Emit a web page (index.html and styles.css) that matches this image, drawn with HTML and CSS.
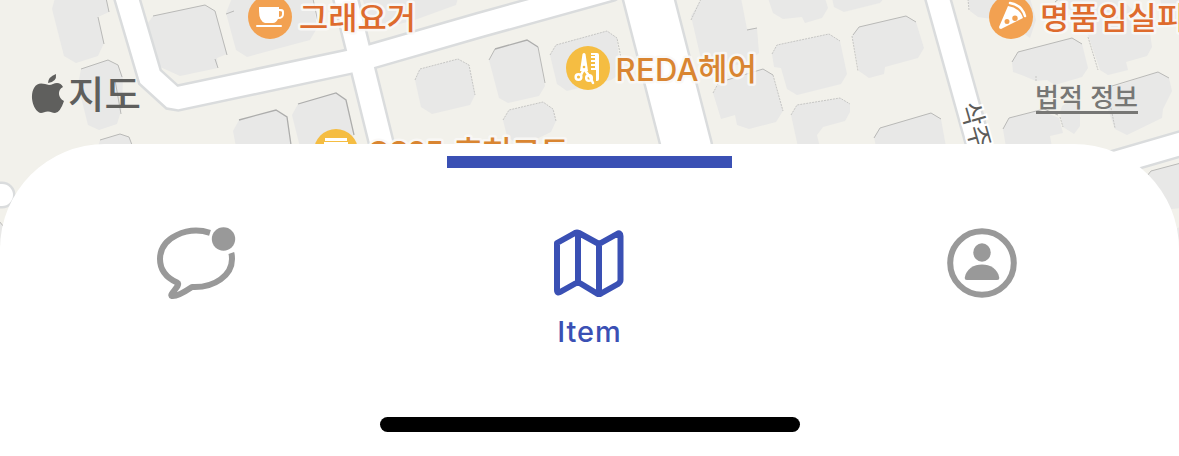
FILE: index.html
```html
<!DOCTYPE html>
<html lang="ko">
<head>
  <meta charset="UTF-8">
  <meta name="viewport" content="width=device-width, initial-scale=1.0">
  <title>Map</title>
  <link rel="stylesheet" href="styles.css">
</head>
<body>

  <div class="screen">
    <!-- Map -->
    <svg class="map" width="1179" height="260" viewBox="0 0 1179 260">
      <!-- Buildings -->
      <g class="buildings">
        <path d="M55-2L52 9L64 56L76 63L98 56L104 43L98 17L109 12L106-2Z"/>
        <path d="M81 69L108 60L118 65L123 77L122 108L117 124L99 130L88 125L78 85Z"/>
        <path d="M100 140L120 134L129 137L133 147L98 147Z"/>
        <path d="M148 23L153 16L205 5L215 11L227 54L217 58L218 68L180 76L158 66Z"/>
        <path d="M232-2L226 13L236 50L247 57L310 40L317 28L313-2Z"/>
        <path d="M233 131L239 120L276 110L287 117L292 147L236 147Z"/>
        <path d="M292 115L298 104L336 93L346 100L355 147L300 147Z"/>
        <path d="M362-2L373 30L412 21L456 5L458-2Z"/>
        <path d="M415 80L420 69L458 59L469 65L475 95L470 105L432 114L421 107Z"/>
        <path d="M489 60L495 49L527 40L538 46L545 86L539 96L508 103L499 98Z"/>
        <path d="M550 55L556 45L607 31L617 38L620 74L611 80L567 91L557 84Z"/>
        <path d="M503 120L509 110L543 102L553 109L556 121L551 132L520 147L507 136Z"/>
        <path d="M702-2L691 16L704 72L745 63L759 53L757 28L747 29L741-2Z"/>
        <path d="M713 93L720 82L763 69L773 75L783 111L776 122L749 129L737 125L735 115L721 119Z"/>
        <path d="M768-2L773 13L783 19L802 17L805 23L822 18L828 8L825-2Z"/>
        <path d="M832-2L834 7L844 12L880 3L884-2Z"/>
        <path d="M772 54L777 45L829 34L840 41L847 74L841 84L797 95L787 89L781 68L774 67Z"/>
        <path d="M852 36L859 27L906 16L916 22L924 48L918 58L885 67L884 74L869 78L859 71L855 51Z"/>
        <path d="M791 115L797 105L840 98L850 104L850 112L845 121L823 127L817 135L820 147L798 147Z"/>
        <path d="M874 137L880 128L931 113L941 119L946 147L876 147Z"/>
        <path d="M968-2L970 11L978 17L1006 21L1030 38L1036 20L1030-2Z"/>
        <path d="M1055-2L1083 20L1100 70L1108 75L1128 70L1126 62L1147 56L1152 47L1149 25L1120-2Z"/>
        <path d="M1012 62L1018 52L1072 38L1082 44L1088 68L1082 77L1055 85L1047 80L1036 81L1024 76L1013 72Z"/>
        <path d="M1003 129L1009 118L1040 110L1059 118L1063 133L1050 136L1052 147L1006 147Z"/>
        <path d="M1062 106L1069 102L1080 102L1080 126L1074 134L1063 127L1060 112Z"/>
        <path d="M1105 101L1110 88L1158 72L1169 78L1172 91L1163 109L1162 118L1127 135L1115 129Z"/>
        <path d="M1147 176L1151 171L1181 163L1181 208L1162 210Z"/>
        <path d="M1174 230L1181 226L1181 245Z"/>
        <path d="M-1 221L4 227L5 245L-1 245Z"/>
        <path d="M1160-2L1163 14L1181 22L1181-2Z"/>
      </g>

      <!-- Building roof edges -->
      <g class="edges">
        <path d="M106-2L109 12M98 17L104 44M81 69L108 60L118 65L122 77M115 80L121 114M100 140L120 134L129 137L132 145"/>
        <path d="M153 16L205 5L215 11L227 55M215 59L218 68M226 14L234 11M313-1L318 22"/>
        <path class="strong" d="M239 120L276 110L287 117L291 145M298 104L336 93L346 100L354 135M495 49L527 40L538 47"/>
        <path d="M538 47L545 83M489 60L495 49M880 128L931 113L941 119M880 128L874 138"/>
        <path d="M859 27L906 16L916 22M859 27L853 35M747 30L757 28M727 80L763 69L773 75"/>
        <path d="M1018 52L1072 38L1082 44M1018 52L1012 62M1112 86L1158 72L1169 78M1003 129L1009 118L1044 109L1058 115"/>
        <path d="M1147 176L1151 171L1181 163M-1 221L4 227M1055 2L1060-2"/>
        <path class="faint" d="M415 80L420 69L458 59L469 65L475 95M550 55L556 45L607 31L617 38L621 58M503 120L509 110L543 102L553 109L556 121"/>
        <path class="faint" d="M691 20L701-1M713 93L719 82M773 75L783 111M772 54L777 45L829 34L840 41M852 36L858 71M791 115L797 105L840 98L850 104"/>
        <path class="faint" d="M968-1L969 10M1088 37L1098 70M1111 108L1115 128M1036 76L1036 81M1060 117L1063 127"/>
      </g>

      <!-- Roads: casing first, surface on top -->
      <g class="road-casing">
        <path d="M125-8L150 77L172 97L178 98L362 59L480 25L610-11"/>
        <path d="M344-8L382 146"/>
        <path class="wide" d="M647-8L687 148"/>
        <path d="M936-8L980 150"/>
        <path d="M1190 141L1080 173"/>
        <path d="M-20 195H2"/>
      </g>
      <g class="road">
        <path d="M125-8L150 77L172 97L178 98L362 59L480 25L610-11"/>
        <path d="M344-8L382 146"/>
        <path class="wide" d="M647-8L687 148"/>
        <path d="M936-8L980 150"/>
        <path d="M1190 141L1080 173"/>
        <path d="M-20 195H2"/>
      </g>

      <!-- Street name -->
      <text class="street" transform="translate(960 105) rotate(74)" x="0" y="0">삭주로</text>

      <!-- Cafe -->
      <circle class="pin-food" cx="270" cy="17" r="22"/>
      <path class="glyph" d="M259 7H279V9H281Q284 9 284 12V14Q284 19 278 19Q276 23 273 23H265Q259 21 259 11ZM279 11V17Q282 17 282 14V12Q282 11 279 11Z" fill-rule="evenodd"/>
      <rect class="glyph" x="256" y="25" width="26" height="2" rx="1"/>
      <text class="place food" x="299" y="29" textLength="117" lengthAdjust="spacingAndGlyphs">그래요거</text>

      <!-- Pizza -->
      <circle class="pin-food" cx="1011" cy="17" r="22"/>
      <path class="glyph" fill-rule="evenodd" d="M1008 6Q1020 8 1023 18L1001 29Q999 29 999 27ZM1007 19A2.500 2.500 0 1 0 1007 24A2.500 2.500 0 1 0 1007 19ZM1015 15.500A2.700 2.700 0 1 0 1015 21A2.700 2.700 0 1 0 1015 15.500Z"/>
      <path class="crust" d="M1010 3Q1022 5 1025 16"/>
      <text class="place food" x="1040" y="29" textLength="146" lengthAdjust="spacingAndGlyphs">명품임실피</text>

      <!-- Hair salon -->
      <circle class="pin-shop" cx="588" cy="68" r="22"/>
      <path class="glyph" d="M582.500 54Q584 52 585.500 54L588 71H580Z"/>
      <path class="scissors" d="M584 69L581 75M584 69L590 77L593 83"/>
      <circle class="scissors" cx="578.500" cy="77" r="2.800"/>
      <circle class="scissors" cx="589" cy="78" r="2.800"/>
      <circle class="pin-shop" cx="584" cy="67" r="1.300"/>
      <path class="glyph" d="M591 53H597Q599 53 599 55V79Q599 81 597 81H596V70H591V68H595V66H591V64H595V62H591V60H595V58H591V56H595V55H591Z"/>
      <text class="place shop latin" x="615.500" y="81" textLength="83">REDA</text>
      <text class="place shop" x="698" y="80" textLength="59" lengthAdjust="spacingAndGlyphs">헤어</text>

      <!-- Convenience store, half hidden by the tab bar -->
      <circle class="pin-shop" cx="336" cy="151" r="22"/>
      <path class="glyph" d="M325 138H347V141H325ZM324 142H348V146H324Z"/>
      <text class="place shop latin" x="367" y="164" textLength="77">GS25</text>
      <text class="place shop" x="454" y="163" textLength="115" lengthAdjust="spacingAndGlyphs">후허코트</text>

      <!-- Attribution -->
      <g class="brand">
        <path d="M56 74Q57 82 48 83Q48 77 56 74Z"/>
        <path d="M49 85C52 85 54 83 57 83Q61 83 63 87C57 90 58 98 64 101Q60 113 55 113C52 113 51 111.500 48 111.500C45 111.500 43 113 41 113C34 112 29 97 34 88C38 81 44 84 49 85Z"/>
        <text class="brand-name" x="68" y="108" textLength="73" lengthAdjust="spacingAndGlyphs">지도</text>
      </g>
      <text class="legal" x="1035" y="107" textLength="103" lengthAdjust="spacingAndGlyphs">법적 정보</text>
      <path class="legal-line" d="M1036 112.500H1138"/>
    </svg>

    <!-- Tab bar -->
    <nav class="tab-bar">
      <a class="tab" href="#" aria-label="Chat">
        <svg class="icon chat" width="80" height="74" viewBox="0 0 80 74">
          <path class="line" d="M53 5.800C31-1 3 10 3 32C3 43 10 51 20 55.500C25 58 11 68 15 69C20 70 29 64 35 60C58 61 75 48 75 32C75 30 75 28 74.300 26"/>
          <circle cx="66.500" cy="12" r="11.700"/>
        </svg>
      </a>
      <a class="tab active" href="#">
        <svg class="icon" width="74" height="70" viewBox="0 0 74 70">
          <path class="line" d="M4 15L22 5Q24 4 26 5L46 16L64 6Q67.500 4 67.500 8V52Q67.500 54 65 56L48 65.500Q46 66.500 44 65.500L25 54L8 63.500Q4 66 4 62V15ZM25 5V54M46 16V65"/>
        </svg>
        <span class="label">Item</span>
      </a>
      <a class="tab" href="#" aria-label="Profile">
        <svg class="icon" width="72" height="70" viewBox="0 0 72 70">
          <circle class="line" cx="35" cy="35" r="31.800"/>
          <ellipse cx="35" cy="24.500" rx="8.700" ry="9.300"/>
          <path d="M20 52Q17.500 52 17.800 49.500C19 41 27 36.500 35 36.500S51 41 52.200 49.500Q52.500 52 50 52Z"/>
        </svg>
      </a>
      <div class="home-indicator"></div>
    </nav>
  </div>

</body>
</html>
```
FILE: styles.css
```css
/* Page */
body {
  margin: 0;
  background-color: #fff;
  font-family: Inter, "Noto Sans CJK KR", sans-serif;
  overflow: hidden;
}

/* Map and tab bar share one grid cell */
.screen {
  display: grid;
  width: 1179px;
  height: 456px;
}

.map {
  grid-area: 1 / 1;
  display: block;
  background-color: #f2f1eb;
}

/* Map drawing */
.buildings {
  fill: #e8e8e7;
}

.edges {
  fill: none;
  stroke: #b9b9b7;
  stroke-width: 1;
}

.edges .strong {
  stroke: #adadac;
  stroke-width: 1.3;
}

.edges .faint {
  stroke: #c6c6c4;
  stroke-dasharray: 2 1;
}

.road-casing,
.road {
  fill: none;
  stroke-linecap: round;
}

.road-casing {
  stroke: #dadcdd;
  stroke-width: 27px;
}

.road {
  stroke: #fff;
  stroke-width: 22px;
}

.road-casing .wide {
  stroke-width: 53px;
}

.road .wide {
  stroke-width: 48px;
}

/* Pins and labels */
.pin-food {
  fill: #f2a151;
}

.pin-shop {
  fill: #f5bd42;
}

.glyph {
  fill: #fff;
}

.crust,
.scissors {
  fill: none;
  stroke: #fff;
  stroke-width: 2.5px;
  stroke-linecap: round;
}

.place {
  font-family: "Noto Sans CJK KR", sans-serif;
  font-size: 31px;
  font-weight: 500;
  stroke: rgba(250, 249, 247, 0.85);
  stroke-width: 5px;
  stroke-linejoin: round;
  paint-order: stroke;
}

.place.latin {
  font-family: Inter, sans-serif;
  font-size: 31px;
}

.food {
  fill: #de6b2d;
}

.shop {
  fill: #d98531;
}

.street {
  font-family: "Noto Sans CJK KR", sans-serif;
  font-size: 26px;
  fill: #5c5c5a;
  stroke: #fff;
  stroke-width: 4px;
  paint-order: stroke;
}

.brand {
  fill: #5f5f5d;
}

.brand-name {
  font-family: "Noto Sans CJK KR", sans-serif;
  font-size: 38px;
  font-weight: 500;
}

.legal {
  font-family: "Noto Sans CJK KR", sans-serif;
  font-size: 26px;
  font-weight: 500;
  fill: #777775;
}

.legal-line {
  stroke: #777775;
  stroke-width: 3px;
}

/* Tab bar */
.tab-bar {
  grid-area: 1 / 1;
  align-self: end;
  z-index: 1;
  display: grid;
  grid-template-columns: repeat(3, 1fr);
  grid-template-rows: 273px 15px;
  height: 312px;
  background-color: #fff;
  border-radius: 105px 105px 0 0;
}

.tab {
  display: flex;
  flex-direction: column;
  align-items: center;
  padding-top: 84px;
  color: #999;
  text-decoration: none;
}

.tab.active {
  color: #3a50b4;
  padding-top: 12px;
}

/* Selected tab marker */
.tab.active::before {
  content: "";
  width: 285px;
  height: 12px;
  margin-bottom: 60px;
  background-color: #3a50b4;
}

.icon {
  fill: currentColor;
}

.icon.chat {
  margin-top: -1px;
}

.icon .line {
  fill: none;
  stroke: currentColor;
  stroke-width: 6px;
  stroke-linejoin: round;
}

.label {
  margin-top: 16px;
  font-size: 29px;
  font-weight: 500;
  line-height: 36px;
  letter-spacing: 0.9px;
}

.home-indicator {
  grid-column: 1 / -1;
  justify-self: center;
  width: 420px;
  height: 15px;
  border-radius: 8px;
  background-color: #000;
}
```
